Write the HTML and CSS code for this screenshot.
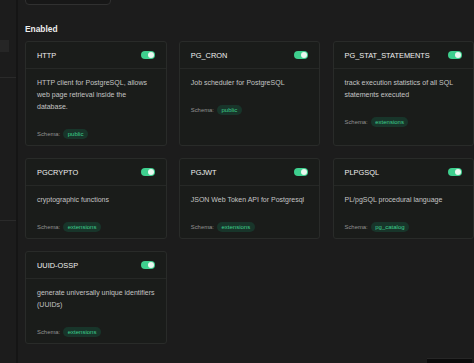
FILE: index.html
```html
<!DOCTYPE html>
<html lang="en">
<head>
  <meta charset="UTF-8" />
  <title>Extensions</title>
  <link rel="stylesheet" href="styles.css">
</head>
<body>
  <div class="app">
    <aside class="sidebar">
      <div class="side-item"></div>
      <div class="side-rule first"></div>
      <div class="side-rule second"></div>
    </aside>

    <main class="main">
      <div class="search"></div>
      <h2 class="section-title">Enabled</h2>

      <div class="grid">
        <div class="card">
          <div class="card-head">
            <span class="card-name">HTTP</span>
            <span class="toggle"></span>
          </div>
          <div class="card-body">
            <p class="desc">HTTP client for PostgreSQL, allows web page retrieval inside the database.</p>
            <div class="schema">Schema: <span class="pill">public</span></div>
          </div>
        </div>

        <div class="card">
          <div class="card-head">
            <span class="card-name">PG_CRON</span>
            <span class="toggle"></span>
          </div>
          <div class="card-body">
            <p class="desc">Job scheduler for PostgreSQL</p>
            <div class="schema">Schema: <span class="pill">public</span></div>
          </div>
        </div>

        <div class="card">
          <div class="card-head">
            <span class="card-name">PG_STAT_STATEMENTS</span>
            <span class="toggle"></span>
          </div>
          <div class="card-body">
            <p class="desc">track execution statistics of all SQL statements executed</p>
            <div class="schema">Schema: <span class="pill">extensions</span></div>
          </div>
        </div>

        <div class="card">
          <div class="card-head">
            <span class="card-name">PGCRYPTO</span>
            <span class="toggle"></span>
          </div>
          <div class="card-body">
            <p class="desc">cryptographic functions</p>
            <div class="schema">Schema: <span class="pill">extensions</span></div>
          </div>
        </div>

        <div class="card">
          <div class="card-head">
            <span class="card-name">PGJWT</span>
            <span class="toggle"></span>
          </div>
          <div class="card-body">
            <p class="desc">JSON Web Token API for Postgresql</p>
            <div class="schema">Schema: <span class="pill">extensions</span></div>
          </div>
        </div>

        <div class="card">
          <div class="card-head">
            <span class="card-name">PLPGSQL</span>
            <span class="toggle"></span>
          </div>
          <div class="card-body">
            <p class="desc">PL/pgSQL procedural language</p>
            <div class="schema">Schema: <span class="pill">pg_catalog</span></div>
          </div>
        </div>

        <div class="card">
          <div class="card-head">
            <span class="card-name">UUID-OSSP</span>
            <span class="toggle"></span>
          </div>
          <div class="card-body">
            <p class="desc">generate universally unique identifiers (UUIDs)</p>
            <div class="schema">Schema: <span class="pill">extensions</span></div>
          </div>
        </div>
      </div>
    </main>
  </div>

  <div class="toast"></div>
</body>
</html>
```

FILE: styles.css
```css
body {
  margin: 0;
  background-color: #1c1c1c;
  color: #ededed;
  font-family: 'Liberation Sans', Arial, sans-serif;
  overflow: hidden;
  height: 363px;
}
.app {
  display: flex;
  height: 100%;
}
.sidebar {
  width: 16px;
  flex: none;
  border-right: 2px solid #151515;
  padding-top: 40px;
}
.side-item {
  width: 9px;
  height: 12px;
  background-color: #262626;
}
.side-rule {
  height: 1px;
  background-color: #2a2a2a;
}
.side-rule.first {
  margin-top: 25px;
}
.side-rule.second {
  margin-top: 142px;
}
.main {
  flex: 1;
  padding-left: 7px;
  min-width: 0;
}
.search {
  width: 86px;
  height: 24px;
  margin-top: -19px;
  border: 1px solid #303030;
  border-radius: 4px;
  background-color: #171717;
  box-sizing: border-box;
}
.section-title {
  margin: 19px 0 7px;
  font-size: 8.4px;
  line-height: 10px;
  font-weight: 700;
  color: #ededed;
}
.grid {
  display: grid;
  grid-template-columns: repeat(3, 141.5px);
  column-gap: 12.25px;
  row-gap: 12px;
  align-items: stretch;
}
.card {
  background-color: #1a1c1a;
  border: 1px solid #292b29;
  border-radius: 3px;
  display: flex;
  flex-direction: column;
}
.card-head {
  height: 26px;
  padding: 0 11px;
  display: flex;
  align-items: center;
  justify-content: space-between;
  border-bottom: 1px solid #262826;
}
.card-name {
  font-size: 7.4px;
  color: #f0f0f0;
}
.toggle {
  position: relative;
  width: 14px;
  height: 8px;
  border-radius: 4px;
  background-color: #3ecf8e;
}
.toggle::after {
  content: '';
  position: absolute;
  right: 1px;
  top: 1px;
  width: 6px;
  height: 6px;
  border-radius: 50%;
  background-color: #e9f7ef;
}
.card-body {
  padding: 8px 7px 6px 11px;
}
.desc {
  margin: 0 0 16px;
  font-size: 7px;
  line-height: 12px;
  color: #c4c4c4;
}
.schema {
  display: flex;
  align-items: center;
  gap: 3px;
  height: 10px;
  font-size: 5.9px;
  color: #939393;
}
.pill {
  padding: 0 4.5px;
  height: 10px;
  line-height: 10px;
  border-radius: 5px;
  background-color: #18352a;
  color: #3ecf8e;
  font-size: 6px;
}
.toast {
  position: absolute;
  right: 2px;
  bottom: 0;
  width: 45px;
  height: 4px;
  background-color: #0b0b0b;
  border-top: 1px solid #262626;
}
```
